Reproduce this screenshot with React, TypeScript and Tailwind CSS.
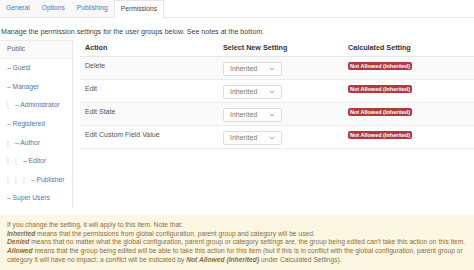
import React from "react";

const tabs = ["General", "Options", "Publishing", "Permissions"];

const groups: { name: string; depth: number }[] = [
  { name: "Guest", depth: 0 },
  { name: "Manager", depth: 0 },
  { name: "Administrator", depth: 1 },
  { name: "Registered", depth: 0 },
  { name: "Author", depth: 1 },
  { name: "Editor", depth: 2 },
  { name: "Publisher", depth: 3 },
  { name: "Super Users", depth: 0 },
];

const actions = ["Delete", "Edit", "Edit State", "Edit Custom Field Value"];

function Chevron() {
  return (
    <svg width="6" height="4" viewBox="0 0 6 4" fill="none">
      <path d="M0.8 0.8 L3 3 L5.2 0.8" stroke="#8a8a8a" strokeWidth="0.8" />
    </svg>
  );
}

export default function App() {
  return (
    <div className="w-[474px] h-[270px] overflow-hidden bg-white font-['Liberation_Sans',Arial,sans-serif] text-[#555]">
      {/* tabs */}
      <div className="flex h-[18px] border-b border-[#e6e6e6]">
        {tabs.map((t) =>
          t === "Permissions" ? (
            <div
              key={t}
              className="px-[6px] h-[18px] -mb-px flex items-center bg-white border-x border-t border-[#e6e6e6] text-[6.7px] text-[#444]"
            >
              {t}
            </div>
          ) : (
            <div
              key={t}
              className="px-[6px] flex items-center bg-[#f8f8f8] text-[6.7px] text-[#4a78b5]"
            >
              {t}
            </div>
          )
        )}
        <div className="flex-1" />
      </div>

      <p className="mt-[9px] px-[1px] text-[7.1px] leading-[10px] text-[#444]">
        Manage the permission settings for the user groups below. See notes at the bottom.
      </p>

      <div className="flex mt-[3px] h-[168px]">
        {/* sidebar */}
        <div className="w-[73px] border-r border-[#e8e8e8] flex flex-col">
          <div className="h-[19px] flex items-center pl-[7px] bg-[#fafafa] border-y border-[#ececec] text-[6.7px] text-[#666]">
            Public
          </div>
          {groups.map((g) => (
            <div key={g.name} className="h-[18.6px] flex items-center pl-[7px] text-[6.7px] text-[#4a78b5]">
              {Array.from({ length: g.depth }).map((_, i) => (
                <span key={i} className="w-[8px] text-[#cfcfcf]">
                  |
                </span>
              ))}
              <span>– {g.name}</span>
            </div>
          ))}
        </div>

        {/* table */}
        <div className="flex-1 ml-[7px]">
          <div className="grid grid-cols-[138px_125px_1fr] h-[17px] items-center border-b border-[#e6e6e6] text-[7.2px] font-bold text-[#333]">
            <div className="pl-[5px]">Action</div>
            <div className="pl-[5px]">Select New Setting</div>
            <div className="pl-[5px]">Calculated Setting</div>
          </div>
          {actions.map((a, i) => (
            <div
              key={a}
              className={
                "grid grid-cols-[138px_125px_1fr] h-[23px] border-b border-[#ececec] " +
                (i % 2 === 0 ? "bg-[#fafafa]" : "bg-white")
              }
            >
              <div className="pl-[5px] pt-[5px] text-[7px] leading-[8px] text-[#555]">{a}</div>
              <div className="pl-[5px] pt-[5px] flex items-start">
                <div className="w-[59px] h-[14px] flex items-center justify-between px-[6px] bg-white border border-[#dcdcdc] rounded-[2px] text-[7px] text-[#777]">
                  <span>Inherited</span>
                  <Chevron />
                </div>
              </div>
              <div className="pl-[5px] pt-[5px] flex items-start">
                <span className="h-[8px] leading-[8px] px-[2px] rounded-[2px] bg-[#b03b3b] text-white text-[5.5px] font-bold whitespace-nowrap">
                  Not Allowed (Inherited)
                </span>
              </div>
            </div>
          ))}
        </div>
      </div>

      {/* notes */}
      <div className="mt-[7px] h-[60px] bg-[#fcf7e3] pt-[6px] px-[7px] text-[6.7px] leading-[8.7px] text-[#8a6d3b] whitespace-nowrap">
        <div>If you change the setting, it will apply to this item. Note that:</div>
        <div>
          <b className="italic">Inherited</b> means that the permissions from global configuration, parent group and category will be used.
        </div>
        <div>
          <b className="italic">Denied</b> means that no matter what the global configuration, parent group or category settings are, the group being edited can't take this action on this item.
        </div>
        <div>
          <b className="italic">Allowed</b> means that the group being edited will be able to take this action for this item (but if this is in conflict with the global configuration, parent group or
        </div>
        <div>
          category it will have no impact; a conflict will be indicated by <b className="italic">Not Allowed (Inherited)</b> under Calculated Settings).
        </div>
      </div>
    </div>
  );
}
